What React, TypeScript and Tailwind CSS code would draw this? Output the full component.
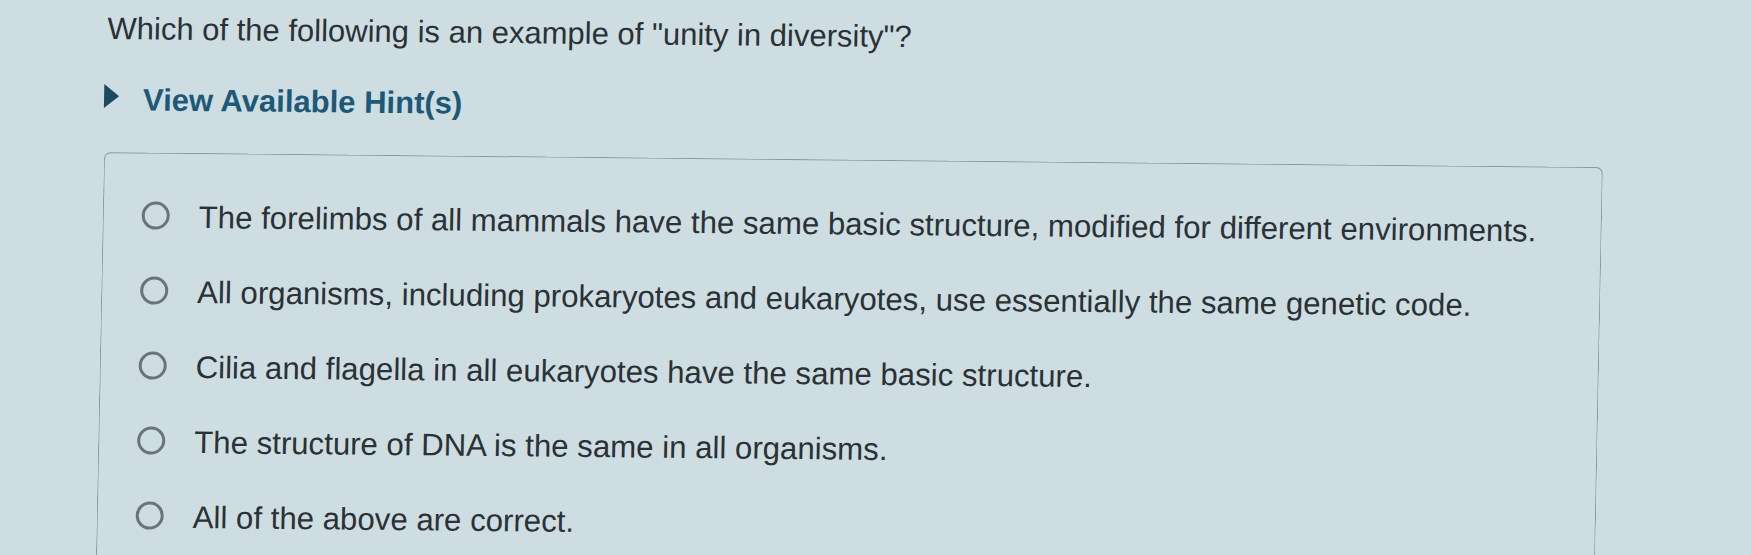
import React from "react";

const OPTIONS = [
  "The forelimbs of all mammals have the same basic structure, modified for different environments.",
  "All organisms, including prokaryotes and eukaryotes, use essentially the same genetic code.",
  "Cilia and flagella in all eukaryotes have the same basic structure.",
  "The structure of DNA is the same in all organisms.",
  "All of the above are correct.",
];

export default function App() {
  return (
    <div
      className="h-[555px] w-[1751px] overflow-hidden bg-[#cddde2] text-[#2b3135]"
      style={{ fontFamily: '"Liberation Sans", Arial, sans-serif' }}
    >
      {/* the screen was photographed at a slight angle */}
      <div className="origin-top-left [transform:matrix(1,0.01,-0.02,1,0,0)]">
        <div className="pl-[108px] pt-[10px]">
          <p className="text-[31px] leading-[36px]">
            Which of the following is an example of "unity in diversity"?
          </p>
        </div>

        {/* hint toggle */}
        <div className="mt-[35px] flex items-center pl-[106px]">
          <span className="-mt-[8px] h-0 w-0 border-y-[12px] border-l-[15px] border-y-transparent border-l-[#1b4a61]" />
          <span className="ml-[24px] text-[31px] font-bold leading-[36px] text-[#1e5877]">
            View Available Hint(s)
          </span>
        </div>

        {/* answer box */}
        <div className="ml-[107px] mt-[34px] w-[1499px] rounded-t-[7px] border border-b-0 border-[#8a979c] pb-[60px] pt-[46px]">
          <div className="flex flex-col gap-[39px] pl-[38px]">
            {OPTIONS.map((o) => (
              <label key={o} className="flex items-center">
                <span className="-mt-[5px] h-[28px] w-[28px] shrink-0 rounded-full border-[3px] border-[#6b7478]" />
                <span className="ml-[29px] text-[31.2px] leading-[36px]">{o}</span>
              </label>
            ))}
          </div>
        </div>
      </div>
    </div>
  );
}
